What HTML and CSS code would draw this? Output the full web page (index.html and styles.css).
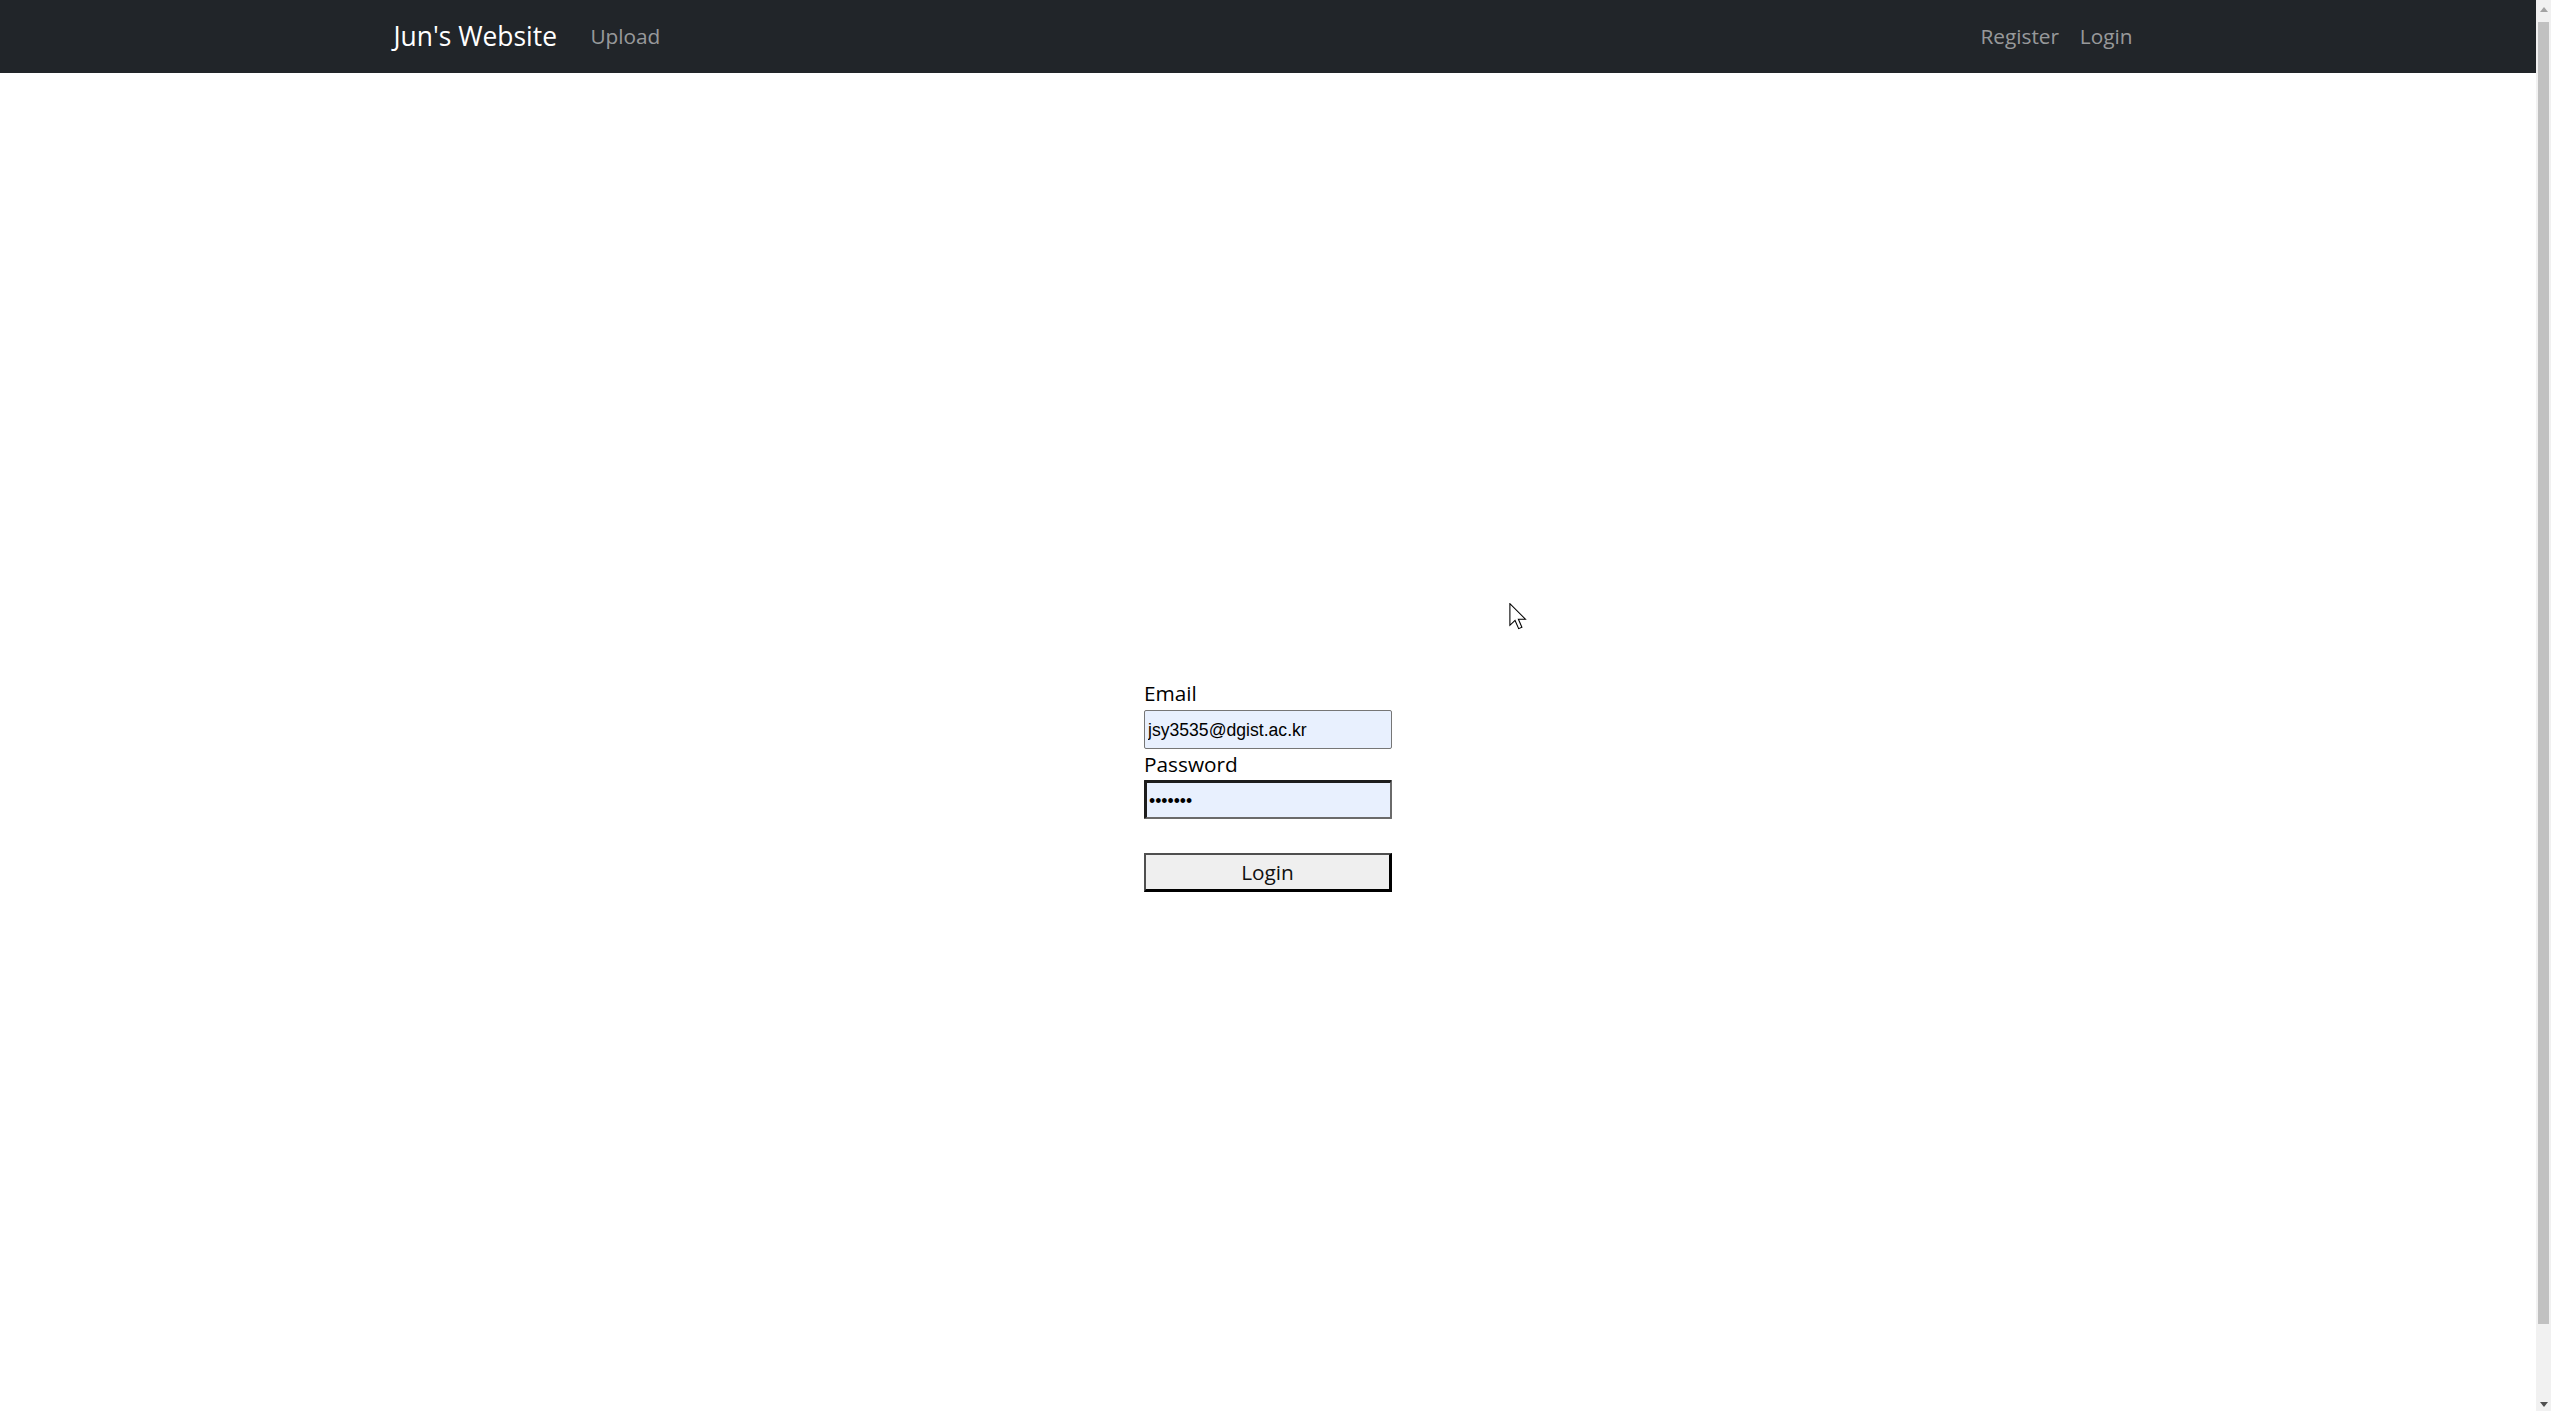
FILE: index.html
```html
<!DOCTYPE html>
<html lang="en">
<head>
<meta charset="utf-8">
<title>Jun's Website - Login</title>
<link rel="stylesheet" href="styles.css">
</head>
<body>
<div class="page">
  <div class="main">
    <nav class="navbar">
      <div class="container">
        <div class="nav-left">
          <a class="brand" href="#">Jun's Website</a>
          <a class="nav-link" href="#">Upload</a>
        </div>
        <div class="nav-right">
          <a class="nav-link" href="#">Register</a>
          <a class="nav-link" href="#">Login</a>
        </div>
      </div>
    </nav>
    <main class="content">
      <form class="login-form">
        <label class="label" for="email">Email</label>
        <input class="input email" id="email" type="text" value="jsy3535@dgist.ac.kr">
        <label class="label" for="password">Password</label>
        <input class="input password" id="password" type="password" value="abcdefg">
        <button class="btn" type="button">Login</button>
      </form>
      <svg class="cursor" width="18" height="27" viewBox="0 0 13 20" aria-hidden="true">
        <path d="M0.5 0.5 L0.5 16.5 L4.3 12.9 L7 19 L9.4 18 L6.8 12 L12 12 Z" fill="#fff" stroke="#000" stroke-width="0.8" stroke-linejoin="miter"/>
      </svg>
    </main>
  </div>
  <div class="scrollbar">
    <div class="sb-arrow sb-up"></div>
    <div class="sb-thumb"></div>
    <div class="sb-track"></div>
    <div class="sb-arrow sb-down"></div>
  </div>
</div>
</body>
</html>
```

FILE: styles.css
```css
html, body {
  margin: 0;
  padding: 0;
  height: 100%;
  overflow: hidden;
  background: #fff;
}

body {
  font-family: "Open Sans", "Noto Sans", sans-serif;
  font-size: 20.8px;
  color: #212529;
}

.page {
  display: flex;
  height: 1411px;
}

.main {
  flex: 1;
  display: flex;
  flex-direction: column;
}

.navbar {
  height: 73px;
  background: #212529;
  display: flex;
  align-items: center;
  flex-shrink: 0;
}

.container {
  width: 1749px;
  margin: 0 auto;
  display: flex;
  justify-content: space-between;
  align-items: center;
}

.nav-left,
.nav-right {
  display: flex;
  align-items: center;
}

.brand {
  color: #fff;
  text-decoration: none;
  font-size: 26.4px;
  line-height: 39px;
  margin-right: 23px;
}

.nav-link {
  color: rgba(255, 255, 255, 0.55);
  text-decoration: none;
  font-size: 20.8px;
  line-height: 31px;
  padding: 0 10.4px;
}

.nav-right .nav-link:last-child {
  padding-right: 10px;
}

.content {
  flex: 1;
  position: relative;
  padding-top: 605px;
}

.login-form {
  width: 248px;
  margin: 0 auto;
  display: flex;
  flex-direction: column;
}

.label {
  display: block;
  font-size: 20.8px;
  line-height: 31.6px;
  color: #000;
}

.input {
  box-sizing: border-box;
  width: 248px;
  height: 39px;
  margin: 0;
  padding: 2px 3px 0;
  font-family: "Liberation Sans", Arial, sans-serif;
  font-size: 17.6px;
  color: #000;
  background: #e8f0fe;
  outline: none;
}

.email {
  border: 1.3px solid #767676;
  border-radius: 2px;
}

.password {
  border-style: solid;
  border-width: 3px 2px 2px 3px;
  border-color: #1d1d1d #6a6a6a #6a6a6a #1d1d1d;
  border-radius: 1px;
  padding-left: 2px;
}

.btn {
  box-sizing: border-box;
  width: 248px;
  height: 39px;
  margin-top: 33.5px;
  padding: 0;
  font-family: "Open Sans", "Noto Sans", sans-serif;
  font-size: 20.8px;
  color: #111;
  background: #efefef;
  border-style: solid;
  border-width: 2px 3px 3px 2px;
  border-color: #4f4f4f #000 #000 #4f4f4f;
  border-radius: 0;
}

.cursor {
  position: absolute;
  left: 1509px;
  top: 530px;
}

.scrollbar {
  width: 15px;
  flex-shrink: 0;
  background: #f1f1f1;
  display: flex;
  flex-direction: column;
  align-items: center;
}

.sb-arrow {
  width: 0;
  height: 0;
  flex-shrink: 0;
  border-left: 4px solid transparent;
  border-right: 4px solid transparent;
}

.sb-up {
  margin-top: 7px;
  margin-bottom: 10px;
  border-bottom: 5px solid #a3a3a3;
}

.sb-thumb {
  width: 11px;
  height: 1302px;
  background: #c1c1c1;
  flex-shrink: 0;
}

.sb-track {
  flex: 1;
}

.sb-down {
  margin-bottom: 4px;
  border-top: 5px solid #505050;
}
```
